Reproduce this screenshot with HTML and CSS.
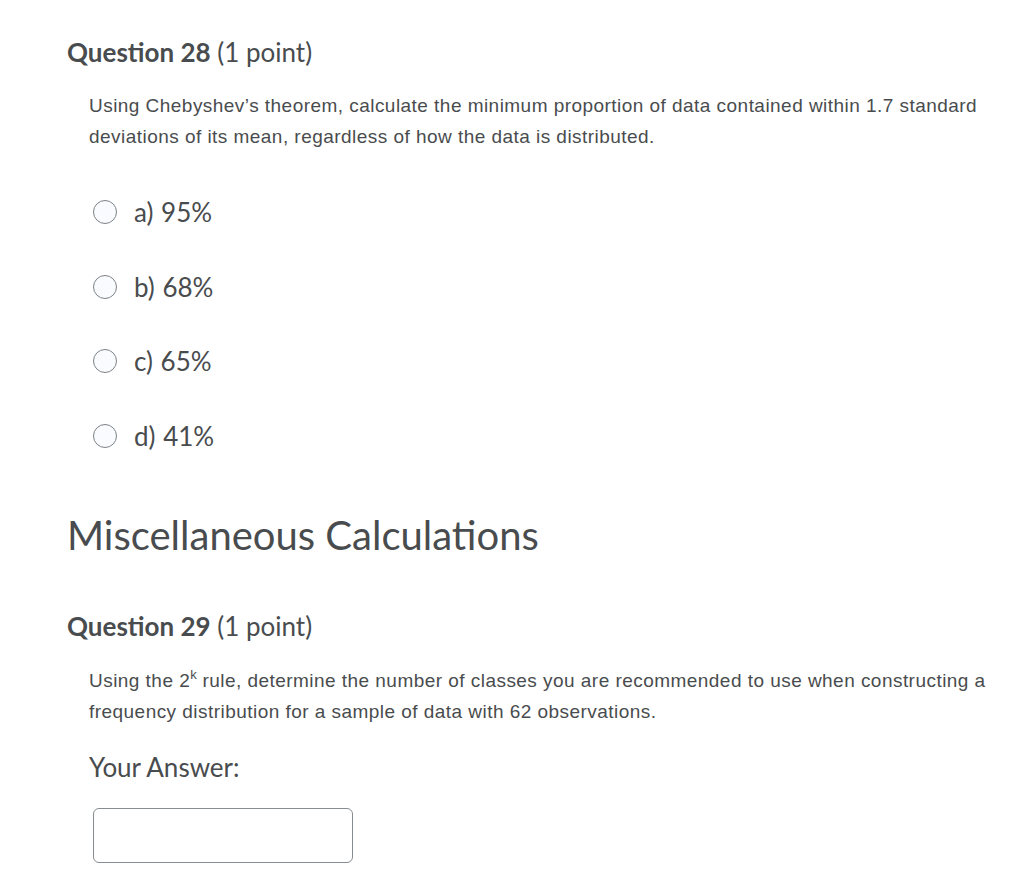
FILE: index.html
```html
<!DOCTYPE html>
<html lang="en">
<head>
<meta charset="utf-8">
<title>Quiz</title>
<link rel="stylesheet" href="styles.css">
</head>
<body>
<main class="page">
  <section class="question">
    <h2 class="q-title"><strong>Question 28</strong> (1 point)</h2>
    <p class="q-text">Using Chebyshev’s theorem, calculate the minimum proportion of data contained within 1.7 standard deviations of its mean, regardless of how the data is distributed.</p>
    <ul class="options">
      <li class="option"><span class="radio"></span><span class="opt-label">a) 95%</span></li>
      <li class="option"><span class="radio"></span><span class="opt-label">b) 68%</span></li>
      <li class="option"><span class="radio"></span><span class="opt-label">c) 65%</span></li>
      <li class="option"><span class="radio"></span><span class="opt-label">d) 41%</span></li>
    </ul>
  </section>
  <h1 class="section-title">Miscellaneous Calculations</h1>
  <section class="question q29">
    <h2 class="q-title"><strong>Question 29</strong> (1 point)</h2>
    <p class="q-text">Using the 2<sup>k</sup> rule, determine the number of classes you are recommended to use when constructing a frequency distribution for a sample of data with 62 observations.</p>
    <div class="answer">
      <div class="answer-label">Your Answer:</div>
      <div class="answer-input"></div>
    </div>
  </section>
</main>
</body>
</html>
```
FILE: styles.css
```css
html, body { margin: 0; padding: 0; background: #fff; }
body { color: #494c4e; font-family: Lato, "Noto Sans", sans-serif; }
.page { padding: 34px 0 0 67px; width: 935px; }
.q-title { margin: 0; font-size: 26px; font-weight: 400; line-height: 36px; }
.q-title strong { font-weight: 700; }
.q-text { margin: 19.5px 0 0 22px; font-family: "Liberation Sans", Arial, sans-serif; font-size: 19px; letter-spacing: 0.46px; line-height: 31px; }
.q29 .q-text { margin-top: 21.5px; }
.q-text sup { font-size: 13px; line-height: 0; vertical-align: 8px; letter-spacing: 0; }
.options { list-style: none; margin: 49px 0 0 26px; padding: 0; display: flex; flex-direction: column; gap: 51.7px; }
.option { display: flex; align-items: center; gap: 17px; height: 23px; }
.radio { width: 22px; height: 22px; border: 1px solid #7c8286; border-radius: 50%; background: #f9fbff; box-sizing: content-box; flex: none; }
.opt-label { font-size: 26px; line-height: 30px; word-spacing: 1px; }
.section-title { margin: 63px 0 0; font-size: 40px; font-weight: 400; line-height: 48px; }
.q29 { margin-top: 49px; }
.answer { margin: 25px 0 0 22px; }
.answer-label { font-size: 26px; line-height: 30px; }
.answer-input { margin: 26px 0 0 4px; width: 260px; height: 55px; border: 1px solid #868c8f; border-radius: 6px; box-sizing: border-box; background: #fff; }
```
